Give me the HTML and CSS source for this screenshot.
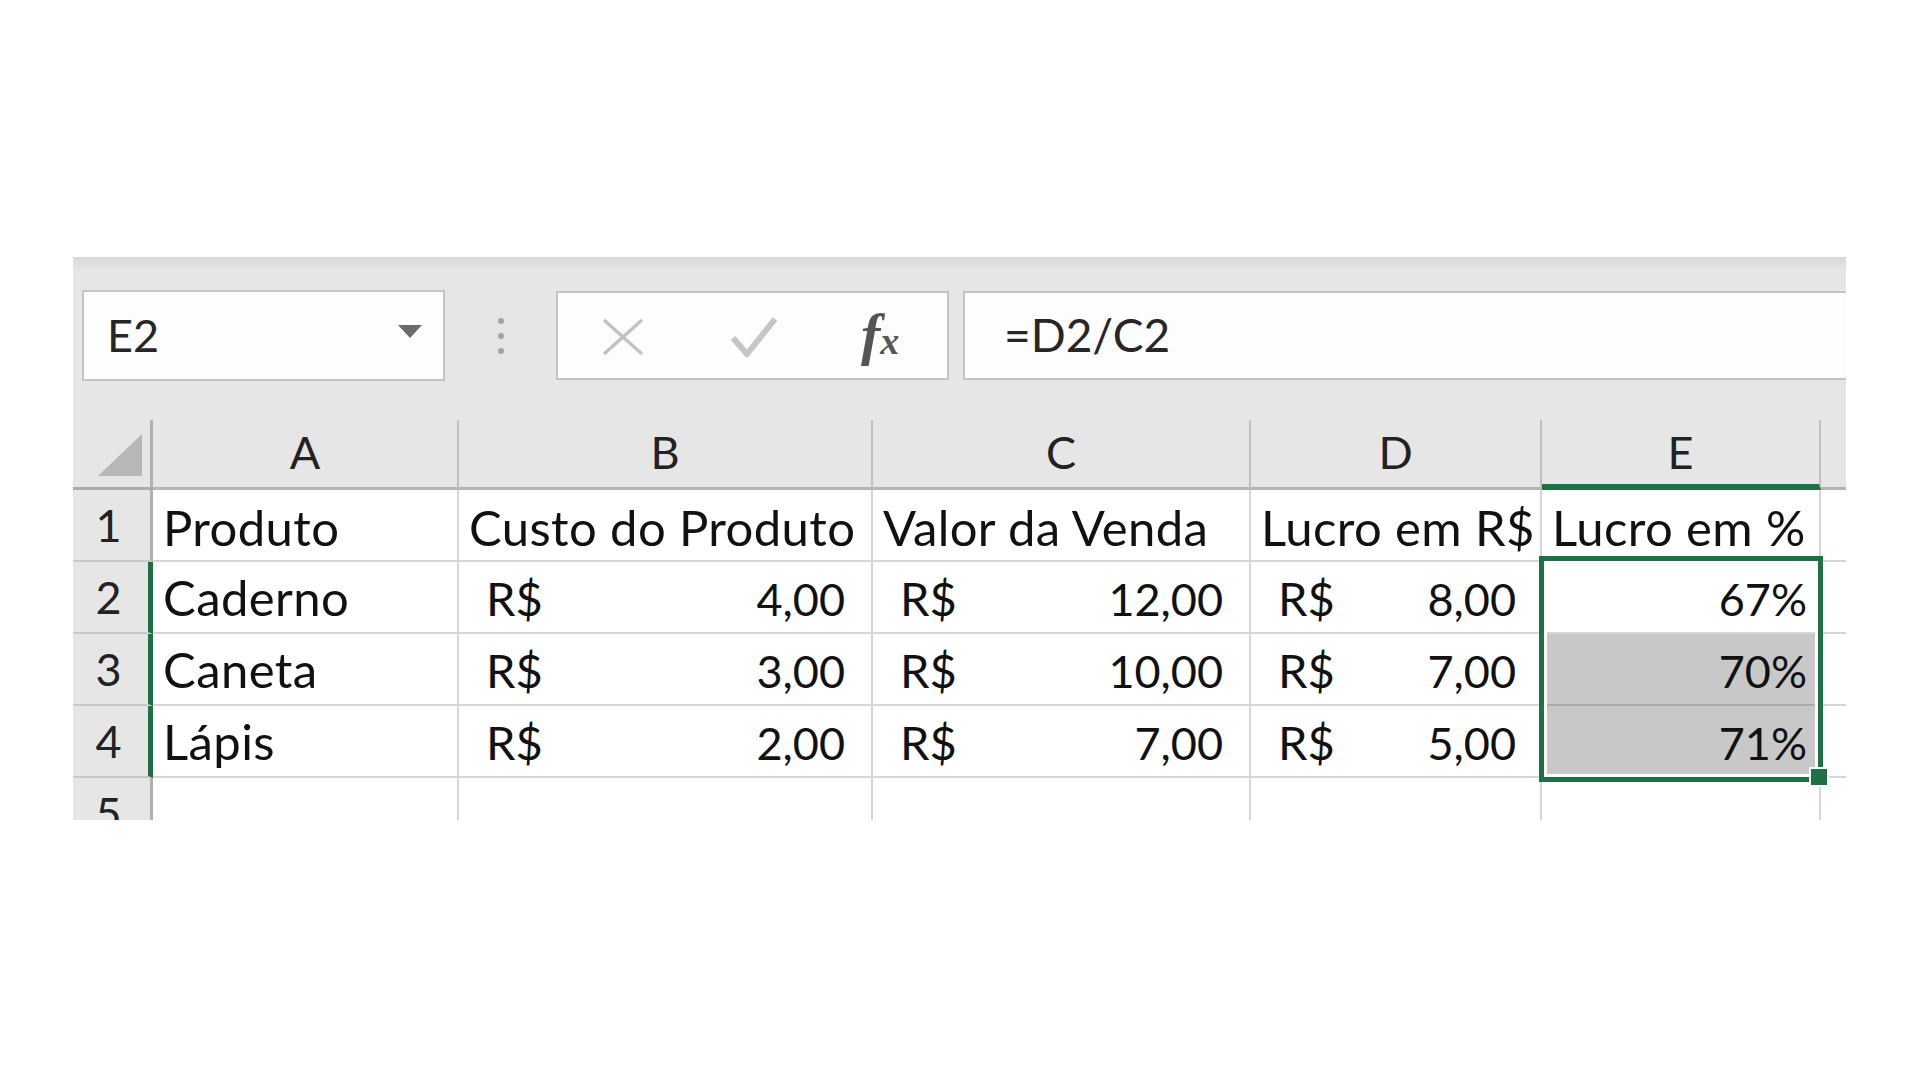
FILE: index.html
```html
<!DOCTYPE html>
<html lang="pt-BR">
<head>
<meta charset="utf-8">
<title>Planilha</title>
<link rel="stylesheet" href="styles.css">
</head>
<body>
<div class="window">
  <div class="formula-bar">
    <div class="namebox">
      <span class="namebox-text">E2</span>
      <svg class="dropdown" width="24" height="13" viewBox="0 0 24 13"><polygon points="0,0 24,0 12,13" fill="#6b6b6b"/></svg>
    </div>
    <div class="dots">
      <svg width="8" height="38" viewBox="0 0 8 38"><circle cx="4" cy="4" r="3" fill="#a3a3a3"/><circle cx="4" cy="19" r="3" fill="#a3a3a3"/><circle cx="4" cy="34" r="3" fill="#a3a3a3"/></svg>
    </div>
    <div class="fx-box">
      <svg class="icon-x" width="42" height="38" viewBox="0 0 42 38"><path d="M2 2 L40 36 M40 2 L2 36" stroke="#c2c2c2" stroke-width="3.5" fill="none"/></svg>
      <svg class="icon-check" width="46" height="42" viewBox="0 0 46 42"><path d="M2 22 L16 38 L44 3" stroke="#c6c6c6" stroke-width="6" fill="none" stroke-linejoin="round"/></svg>
      <span class="fx"><i>f</i><i class="fx-x">x</i></span>
    </div>
    <div class="formula-input">=D2/C2</div>
  </div>
  <div class="sheet">
    <div class="hdr corner"><svg width="44" height="42" viewBox="0 0 44 42"><polygon points="44,0 44,42 0,42" fill="#b7b7b7"/></svg></div>
    <div class="hdr col">A</div>
    <div class="hdr col">B</div>
    <div class="hdr col">C</div>
    <div class="hdr col">D</div>
    <div class="hdr col col-sel">E</div>
    <div class="hdr col col-last"></div>

    <div class="hdr row">1</div>
    <div class="cell head">Produto</div>
    <div class="cell head">Custo do Produto</div>
    <div class="cell head">Valor da Venda</div>
    <div class="cell head">Lucro em R$</div>
    <div class="cell head">Lucro em %</div>
    <div class="cell cell-last"></div>

    <div class="hdr row row-sel">2</div>
    <div class="cell">Caderno</div>
    <div class="cell money"><span class="cur">R$</span><span class="num">4,00</span></div>
    <div class="cell money"><span class="cur">R$</span><span class="num">12,00</span></div>
    <div class="cell money money-d"><span class="cur">R$</span><span class="num">8,00</span></div>
    <div class="cell pct"><span class="num">67%</span></div>
    <div class="cell cell-last"></div>

    <div class="hdr row row-sel">3</div>
    <div class="cell">Caneta</div>
    <div class="cell money"><span class="cur">R$</span><span class="num">3,00</span></div>
    <div class="cell money"><span class="cur">R$</span><span class="num">10,00</span></div>
    <div class="cell money money-d"><span class="cur">R$</span><span class="num">7,00</span></div>
    <div class="cell pct shaded"><span class="num">70%</span></div>
    <div class="cell cell-last"></div>

    <div class="hdr row row-sel">4</div>
    <div class="cell">Lápis</div>
    <div class="cell money"><span class="cur">R$</span><span class="num">2,00</span></div>
    <div class="cell money"><span class="cur">R$</span><span class="num">7,00</span></div>
    <div class="cell money money-d"><span class="cur">R$</span><span class="num">5,00</span></div>
    <div class="cell pct shaded"><span class="num">71%</span></div>
    <div class="cell cell-last"></div>

    <div class="hdr row">5</div>
    <div class="cell"></div>
    <div class="cell"></div>
    <div class="cell"></div>
    <div class="cell"></div>
    <div class="cell"></div>
    <div class="cell cell-last"></div>

    <div class="selection"></div>
    <div class="fill-handle"></div>
  </div>
</div>
</body>
</html>
```
FILE: styles.css
```css
html, body {
  margin: 0;
  padding: 0;
  background: #ffffff;
}

body {
  width: 1920px;
  height: 1080px;
  font-family: Lato, "Liberation Sans", sans-serif;
  color: #111;
}

.window {
  margin-left: 73px;
  margin-top: 257px;
  width: 1773px;
  height: 563px;
  overflow: hidden;
  background: #e6e6e6;
}

.formula-bar {
  height: 163px;
  box-sizing: border-box;
  padding-top: 33px;
  padding-left: 9px;
  display: flex;
  align-items: flex-start;
  background: linear-gradient(#d9d9d9 0px, #e6e6e6 14px, #e6e6e6 100%);
}

.formula-bar > * {
  flex-shrink: 0;
}

.namebox {
  width: 363px;
  height: 91px;
  box-sizing: border-box;
  border: 2px solid #c4c4c4;
  background: #fdfdfd;
  display: flex;
  align-items: center;
  justify-content: space-between;
  padding: 0 21px 2px 23px;
}

.namebox-text {
  font-size: 45px;
  color: #262626;
}

.dropdown {
  margin-top: -6px;
}

.dots {
  width: 111px;
  height: 91px;
  display: flex;
  align-items: center;
  justify-content: center;
}

.fx-box {
  width: 393px;
  height: 89px;
  margin-top: 1px;
  box-sizing: border-box;
  border: 2px solid #c4c4c4;
  background: #fdfdfd;
  display: flex;
  align-items: center;
  padding-left: 44px;
}

.icon-x {
  margin-top: 2px;
}

.icon-check {
  margin-left: 87px;
  margin-top: 2px;
}

.fx {
  margin-left: 84px;
  font-family: "Liberation Serif", serif;
  font-size: 58px;
  font-weight: bold;
  color: #555555;
  display: flex;
  align-items: baseline;
  margin-top: -2px;
}

.fx-x {
  font-size: 38px;
}

.formula-input {
  margin-left: 14px;
  width: 1000px;
  height: 89px;
  margin-top: 1px;
  box-sizing: border-box;
  border: 2px solid #c4c4c4;
  background: #fdfdfd;
  display: flex;
  align-items: center;
  padding-left: 39px;
  padding-bottom: 2px;
  font-size: 46px;
  color: #262626;
}

.sheet {
  position: relative;
  display: grid;
  grid-template-columns: 80px 306px 414px 378px 291px 279px 25px;
  grid-template-rows: 70px 72px 72px 72px 72px 72px;
  background: #ffffff;
}

.hdr {
  background: #e6e6e6;
  box-sizing: border-box;
  font-size: 45px;
  color: #222;
}

.corner {
  border-right: 3px solid #b0b0b0;
  border-bottom: 3px solid #acacac;
  display: flex;
  align-items: flex-end;
  justify-content: flex-end;
  padding: 0 8px 11px 0;
}

.col {
  border-right: 2px solid #c0c0c0;
  border-bottom: 3px solid #b4b4b4;
  display: flex;
  align-items: flex-end;
  justify-content: center;
  padding-bottom: 8px;
}

.col-sel {
  border-bottom: 6px solid #1e7145;
  padding-bottom: 5px;
}

.col-last {
  border-right: none;
}

.row {
  border-right: 3px solid #b0b0b0;
  border-bottom: 2px solid #c8c8c8;
  display: flex;
  align-items: flex-end;
  justify-content: center;
  padding-bottom: 8px;
  padding-right: 6px;
}

.row-sel {
  border-right: 5px solid #1e7145;
  padding-right: 4px;
}

.cell {
  box-sizing: border-box;
  border-right: 2px solid #d6d6d6;
  border-bottom: 2px solid #d6d6d6;
  font-size: 49px;
  letter-spacing: 0.4px;
  color: #111;
  display: flex;
  align-items: flex-end;
  padding: 0 0 6px 10px;
  white-space: nowrap;
  overflow: hidden;
}

.head {
  padding-bottom: 4px;
}

.cell-last {
  border-right: none;
}

.cur {
  font-size: 47px;
  letter-spacing: 0;
}

.num {
  font-size: 45px;
  letter-spacing: 0;
}

.money {
  justify-content: space-between;
  padding-left: 27px;
  padding-right: 26px;
}

.money-d {
  padding-right: 24px;
}

.pct {
  justify-content: flex-end;
  padding-right: 12px;
}

.shaded {
  background: #c8c8c8;
  border-bottom-color: #acacac;
}

.selection {
  position: absolute;
  left: 1466px;
  top: 136px;
  width: 284px;
  height: 226px;
  box-sizing: border-box;
  border: 5px solid #1e7145;
  box-shadow: inset 0 0 0 3px #ffffff;
  pointer-events: none;
}

.fill-handle {
  position: absolute;
  left: 1736px;
  top: 347px;
  width: 16px;
  height: 16px;
  background: #1e7145;
  border: 2px solid #ffffff;
}
```
